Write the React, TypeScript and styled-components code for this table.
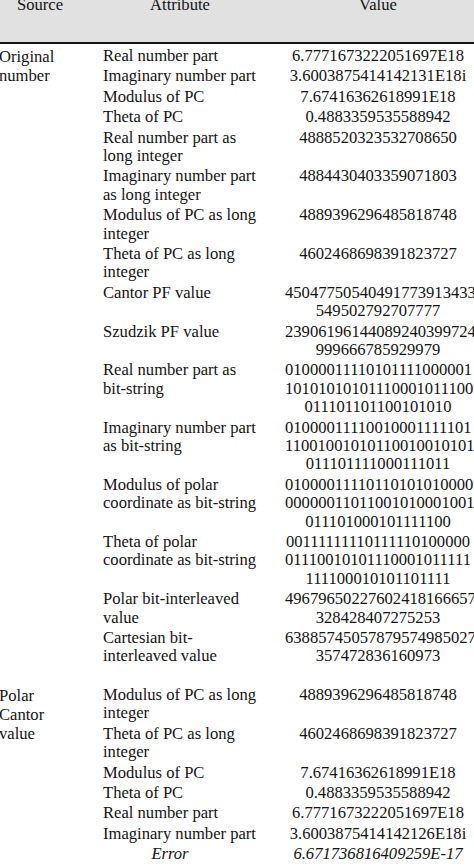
import React from 'react';
import styled, { createGlobalStyle } from 'styled-components';

const GlobalStyle = createGlobalStyle`
  html, body {
    margin: 0;
    padding: 0;
    background: #ffffff;
    overflow: hidden;
  }
  body {
    font-family: "Liberation Serif", "Times New Roman", serif;
    color: #141414;
  }
`;

const Table = styled.div`
  width: 474px;
  overflow: hidden;
  font-size: 16.6px;
  line-height: 18.4px;
`;

const Header = styled.div`
  display: grid;
  grid-template-columns: 103px 182px 186px;
  height: 46px;
  margin-top: -3.8px;
  background: #e1e1e1;
  border-bottom: 2.5px solid #141414;
`;

const HeaderCell = styled.div<{ $padRight?: number }>`
  text-align: center;
  padding-right: ${({ $padRight }) => $padRight ?? 0}px;
`;

const Body = styled.div`
  padding-top: 1.7px;
`;

const Group = styled.div<{ $gap?: number }>`
  display: grid;
  grid-template-columns: 103px 182px 186px;
  margin-top: ${({ $gap }) => $gap ?? 0}px;
`;

const SourceCell = styled.div<{ $rows: number }>`
  grid-column: 1;
  grid-row: 1 / span ${({ $rows }) => $rows};
  width: 75px;
  margin-left: -1px;
  padding-top: 1px;
  line-height: 19px;
`;

const AttrCell = styled.div<{ $italic?: boolean }>`
  grid-column: 2;
  padding: 1px ${({ $italic }) => ($italic ? 48 : 25)}px 1px 0;
  font-style: ${({ $italic }) => ($italic ? 'italic' : 'normal')};
  text-align: ${({ $italic }) => ($italic ? 'center' : 'left')};
`;

const ValueCell = styled.div<{ $italic?: boolean }>`
  grid-column: 3;
  padding: 1px 0;
  text-align: center;
  font-style: ${({ $italic }) => ($italic ? 'italic' : 'normal')};
`;

const ValueLine = styled.div`
  white-space: nowrap;
`;

type Row = { attr: string; value: string[]; italic?: boolean };

const original: Row[] = [
  { attr: 'Real number part', value: ['6.7771673222051697E18'] },
  { attr: 'Imaginary number part', value: ['3.6003875414142131E18i'] },
  { attr: 'Modulus of PC', value: ['7.67416362618991E18'] },
  { attr: 'Theta of PC', value: ['0.4883359535588942'] },
  { attr: 'Real number part as long integer', value: ['4888520323532708650'] },
  { attr: 'Imaginary number part as long integer', value: ['4884430403359071803'] },
  { attr: 'Modulus of PC as long integer', value: ['4889396296485818748'] },
  { attr: 'Theta of PC as long integer', value: ['4602468698391823727'] },
  { attr: 'Cantor PF value', value: ['45047750540491773913433', '549502792707777'] },
  { attr: 'Szudzik PF value', value: ['23906196144089240399724', '999666785929979'] },
  {
    attr: 'Real number part as bit-string',
    value: ['01000011110101111000001', '10101010101110001011100', '011101101100101010'],
  },
  {
    attr: 'Imaginary number part as bit-string',
    value: ['01000011110010001111101', '11001001010110010010101', '011101111000111011'],
  },
  {
    attr: 'Modulus of polar coordinate as bit-string',
    value: ['01000011110110101010000', '00000011011001010001001', '011101000101111100'],
  },
  {
    attr: 'Theta of polar coordinate as bit-string',
    value: ['00111111110111110100000', '01110010101110001011111', '111100010101101111'],
  },
  { attr: 'Polar bit-interleaved value', value: ['49679650227602418166657', '328428407275253'] },
  { attr: 'Cartesian bit-interleaved value', value: ['63885745057879574985027', '357472836160973'] },
];

const polarCantor: Row[] = [
  { attr: 'Modulus of PC as long integer', value: ['4889396296485818748'] },
  { attr: 'Theta of PC as long integer', value: ['4602468698391823727'] },
  { attr: 'Modulus of PC', value: ['7.67416362618991E18'] },
  { attr: 'Theta of PC', value: ['0.4883359535588942'] },
  { attr: 'Real number part', value: ['6.7771673222051697E18'] },
  { attr: 'Imaginary number part', value: ['3.6003875414142126E18i'] },
  { attr: 'Error', value: ['6.671736816409259E-17'], italic: true },
];

const SourceGroup: React.FC<{ source: string; rows: Row[]; gap?: number }> = ({ source, rows, gap }) => (
  <Group $gap={gap}>
    <SourceCell $rows={rows.length}>{source}</SourceCell>
    {rows.map((row, i) => (
      <React.Fragment key={i}>
        <AttrCell $italic={row.italic}>{row.attr}</AttrCell>
        <ValueCell $italic={row.italic}>
          {row.value.map((line, j) => (
            <ValueLine key={j}>{line}</ValueLine>
          ))}
        </ValueCell>
      </React.Fragment>
    ))}
  </Group>
);

const App: React.FC = () => {
  return (
    <>
      <GlobalStyle />
      <Table>
        <Header>
          <HeaderCell $padRight={23}>Source</HeaderCell>
          <HeaderCell $padRight={28}>Attribute</HeaderCell>
          <HeaderCell>Value</HeaderCell>
        </Header>
        <Body>
          <SourceGroup source="Original number" rows={original} />
          <SourceGroup source="Polar Cantor value" rows={polarCantor} gap={18} />
        </Body>
      </Table>
    </>
  );
};

export default App;
